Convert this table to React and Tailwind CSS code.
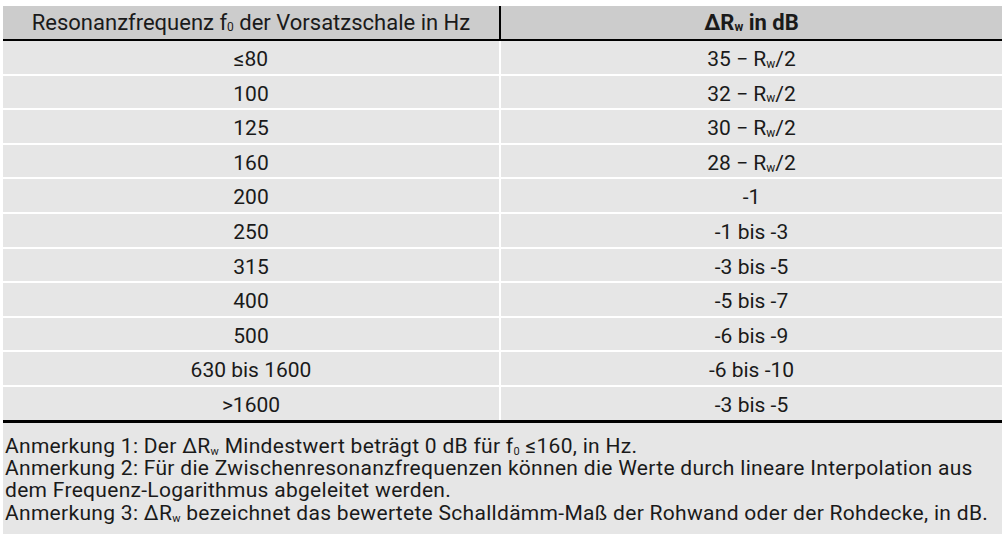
import React from "react";

const Sub = ({ children }) => (
  <span className="text-[12px] leading-none relative top-[4px]">{children}</span>
);

const FSub = ({ children }) => (
  <span className="text-[11px] leading-none relative top-[2px]">{children}</span>
);

const rows = [
  ["≤80", <>35 − R<Sub>w</Sub>/2</>],
  ["100", <>32 − R<Sub>w</Sub>/2</>],
  ["125", <>30 − R<Sub>w</Sub>/2</>],
  ["160", <>28 − R<Sub>w</Sub>/2</>],
  ["200", "-1"],
  ["250", "-1 bis -3"],
  ["315", "-3 bis -5"],
  ["400", "-5 bis -7"],
  ["500", "-6 bis -9"],
  ["630 bis 1600", "-6 bis -10"],
  [">1600", "-3 bis -5"],
];

export default function App() {
  return (
    <div
      className="w-[1002px] h-[542px] bg-white pt-[6px] pl-[3px] text-[#1a1a1a] overflow-hidden"
      style={{ fontFamily: 'Roboto, "Noto Sans", sans-serif' }}
    >
      <div className="flex h-[33px] bg-[#cccccc] text-[22px]">
        <div className="w-[496px] flex items-center justify-center">
          Resonanzfrequenz f<Sub>0</Sub>&nbsp;der Vorsatzschale in Hz
        </div>
        <div className="w-[2px] bg-black" />
        <div className="flex-1 flex items-center justify-center font-bold">
          ΔR<Sub>w</Sub>&nbsp;in dB
        </div>
      </div>
      <div className="h-[2px] bg-black" />
      <div className="flex flex-col gap-[2px] text-[21px]">
        {rows.map(([a, b], i) => (
          <div key={i} className="flex gap-[2px] h-[32.6px]">
            <div className="w-[496px] bg-[#e6e6e6] flex items-center justify-center pt-[5px]">
              {a}
            </div>
            <div className="flex-1 bg-[#e6e6e6] flex items-center justify-center pt-[5px]">
              {b}
            </div>
          </div>
        ))}
      </div>
      <div className="h-[3px] bg-black" />
      <div className="bg-[#e6e6e6] h-[111px] pl-[2px] pt-[12px] text-[21px] tracking-[0.3px] leading-[22.4px]">
        <div>
          Anmerkung 1: Der ΔR<FSub>w</FSub> Mindestwert beträgt 0 dB für f<FSub>0</FSub> ≤160, in Hz.
        </div>
        <div>
          Anmerkung 2: Für die Zwischenresonanzfrequenzen können die Werte durch lineare Interpolation aus
        </div>
        <div>dem Frequenz-Logarithmus abgeleitet werden.</div>
        <div>
          Anmerkung 3: ΔR<FSub>w</FSub> bezeichnet das bewertete Schalldämm-Maß der Rohwand oder der Rohdecke, in dB.
        </div>
      </div>
    </div>
  );
}
